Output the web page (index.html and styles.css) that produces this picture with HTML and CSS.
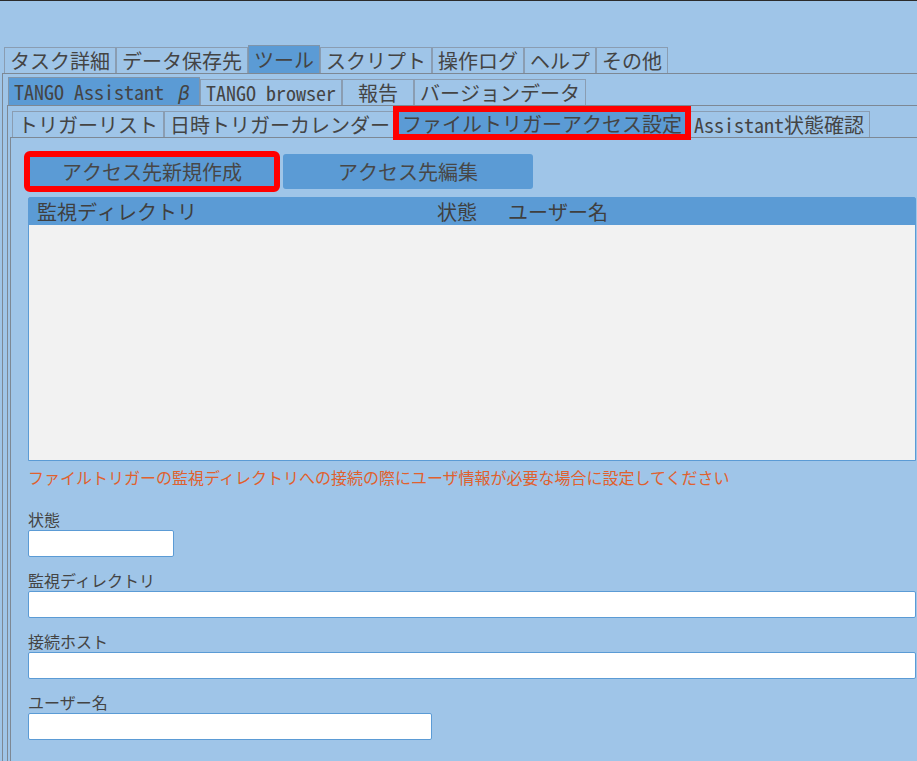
FILE: index.html
```html
<!DOCTYPE html>
<html lang="ja">
<head>
<meta charset="utf-8">
<link rel="stylesheet" href="styles.css">
</head>
<body>
<div class="topline"></div>
<div class="tabs l1">
  <div class="tab">タスク詳細</div>
  <div class="tab">データ保存先</div>
  <div class="tab sel">ツール</div>
  <div class="tab">スクリプト</div>
  <div class="tab">操作ログ</div>
  <div class="tab">ヘルプ</div>
  <div class="tab">その他</div>
</div>
<div class="panel p1">
  <div class="tabs l2">
    <div class="tab sel">TANGO Assistant <span class="beta">β</span></div>
    <div class="tab">TANGO browser</div>
    <div class="tab"> 報告 </div>
    <div class="tab">バージョンデータ</div>
  </div>
  <div class="panel p2">
    <div class="tabs l3">
      <div class="tab">トリガーリスト</div>
      <div class="tab">日時トリガーカレンダー</div>
      <div class="tab sel hl">ファイルトリガーアクセス設定</div>
      <div class="tab">Assistant状態確認</div>
    </div>
    <div class="panel p3">
      <div class="buttons">
        <div class="btn hl">アクセス先新規作成</div>
        <div class="btn">アクセス先編集</div>
      </div>
      <div class="table">
        <div class="thead">
          <span>監視ディレクトリ</span>
          <span>状態</span>
          <span>ユーザー名</span>
        </div>
        <div class="tbody"></div>
      </div>
      <p class="note">ファイルトリガーの監視ディレクトリへの接続の際にユーザ情報が必要な場合に設定してください</p>
      <div class="form">
        <label class="lbl first">状態</label>
        <div class="input w-state"></div>
        <label class="lbl">監視ディレクトリ</label>
        <div class="input w-full"></div>
        <label class="lbl">接続ホスト</label>
        <div class="input w-full"></div>
        <label class="lbl">ユーザー名</label>
        <div class="input w-user"></div>
      </div>
    </div>
  </div>
</div>
</body>
</html>
```
FILE: styles.css
```css
html, body {
  margin: 0;
  padding: 0;
}
body {
  background: #9fc5e8;
  width: 917px;
  height: 761px;
  overflow: hidden;
  font-family: "Noto Sans Mono CJK JP", "Noto Sans CJK JP", monospace;
  color: #444;
}
.topline {
  height: 1px;
  background: #2b2b2b;
}
.tabs {
  display: flex;
  align-items: flex-end;
  height: 28px;
}
.tab {
  box-sizing: border-box;
  height: 26px;
  padding: 0 5px;
  border: 1px solid #8a9db2;
  border-bottom: none;
  font-size: 20px;
  line-height: 25px;
  white-space: pre;
  color: #444;
}
.tab.sel {
  height: 28px;
  line-height: 27px;
  background: #5b9bd5;
  border-color: #7f95ab;
}
.beta {
  display: inline-block;
  width: 20px;
  text-align: center;
  font-family: "DejaVu Sans", sans-serif;
  font-style: italic;
  font-size: 19px;
}
.hl {
  position: relative;
  z-index: 2;
  outline: 6px solid #ff0000;
  outline-offset: -3px;
}
.l1 {
  margin-top: 44px;
  margin-left: 4px;
}
.panel {
  border-top: 1px solid #7d8894;
  border-left: 1px solid #7d8894;
}
.p1 {
  margin-left: 2px;
  padding-top: 3px;
}
.l2 {
  margin-left: 5px;
}
.p2 {
  margin-left: 4px;
  padding-top: 3px;
}
.l3 {
  margin-left: 4px;
}
.p3 {
  margin-left: 2px;
  padding: 16px 1px 30px 17px;
}
.buttons {
  display: flex;
  gap: 6px;
  margin-left: -1px;
}
.btn {
  width: 250px;
  height: 35px;
  box-sizing: border-box;
  background: #5b9bd5;
  border-radius: 3px;
  font-size: 20px;
  line-height: 35px;
  text-align: center;
  color: #474747;
}
.table {
  margin-top: 8px;
  border: 1px solid #5b9bd5;
  border-radius: 2px 2px 0 0;
}
.thead {
  display: grid;
  grid-template-columns: 400px 71px 1fr;
  height: 27px;
  padding-left: 8px;
  background: #5b9bd5;
  font-size: 20px;
  line-height: 27px;
  color: #3f3f3f;
}
.tbody {
  height: 235px;
  background: #f2f2f2;
}
.note {
  margin: 5px 0 0;
  font-family: "Noto Sans CJK JP", sans-serif;
  font-size: 16px;
  line-height: 22px;
  color: #e0612e;
}
.form {
  display: flex;
  flex-direction: column;
  align-items: flex-start;
}
.lbl {
  display: block;
  margin-top: 12px;
  font-family: "Noto Sans CJK JP", sans-serif;
  font-size: 16px;
  line-height: 22px;
  color: #444;
}
.lbl.first {
  margin-top: 20px;
}
.input {
  box-sizing: border-box;
  height: 27px;
  background: #fff;
  border: 1px solid #5b9bd5;
  border-radius: 2px;
}
.w-state {
  width: 146px;
}
.w-full {
  width: 100%;
}
.w-user {
  width: 404px;
}
```
